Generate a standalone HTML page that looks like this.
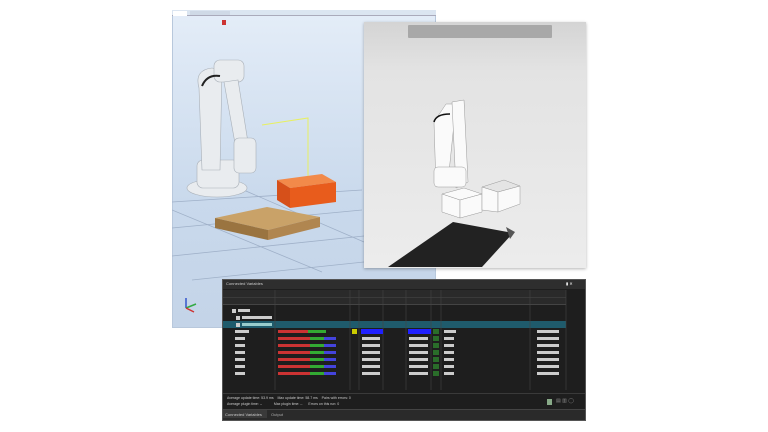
<!DOCTYPE html>
<html><head><meta charset="utf-8"><style>
*{margin:0;padding:0;box-sizing:border-box}
body{width:768px;height:432px;background:#fff;position:relative;overflow:hidden;font-family:"Liberation Sans",sans-serif}
.a{position:absolute}
.t{font-size:4px;color:#ddd;white-space:nowrap;position:absolute}
</style></head><body>
<div class="a" style="left:172px;top:10px;width:264px;height:318px;background:linear-gradient(#e4edf8,#c9d9ec 60%,#c4d4e8);border:1px solid #b8c8dc"></div>
<div class="a" style="left:172px;top:10px;width:264px;height:6px;background:#dbe5f1;border-bottom:1px solid #aab"></div>
<div class="a" style="left:173px;top:11px;width:14px;height:5px;background:#fff"></div>
<div class="a" style="left:190px;top:11px;width:40px;height:4px;background:#cfd9e6"></div>
<div class="a" style="left:222px;top:20px;width:4px;height:5px;background:#c33"></div>
<svg class="a" style="left:172px;top:10px" width="264" height="318">
<g stroke="#9fb0c8" stroke-width="0.8" fill="none">
<path d="M0 192 L190 180 M0 218 L190 200 M0 246 L192 226 M20 270 L192 252 M60 175 L192 232 M0 200 L150 262"/>
</g>
<path d="M90 115 L136 108 L136 172" stroke="#e8f060" stroke-width="1" fill="none"/>
<polygon points="105,170 150,164 164,172 118,178" fill="#f28a4a"/>
<polygon points="105,170 118,178 118,198 105,190" fill="#d6501a"/>
<polygon points="118,178 164,172 164,192 118,198" fill="#e85c1c"/>
<polygon points="43,208 95,197 148,207 96,220" fill="#c9a268"/>
<polygon points="43,208 96,220 96,230 43,218" fill="#9a7440"/>
<polygon points="96,220 148,207 148,217 96,230" fill="#b08650"/>
<g fill="#e9ecef" stroke="#a9b0b8" stroke-width="0.6">
<ellipse cx="45" cy="178" rx="30" ry="9"/>
<rect x="25" y="150" width="42" height="28" rx="6"/>
<path d="M27 78 Q22 60 40 58 L50 60 L48 160 L30 160 Z"/>
<rect x="42" y="50" width="30" height="22" rx="6"/>
<path d="M52 72 L66 70 L78 145 L66 150 Z"/>
<rect x="62" y="128" width="22" height="35" rx="5"/>
</g>
<path d="M30 76 Q35 64 48 66" stroke="#222" stroke-width="2" fill="none"/>
<path d="M14 298 L14 288" stroke-width="1.5" stroke="#3355cc"/>
<path d="M14 298 L24 294" stroke="#33aa44" stroke-width="1.5"/>
<path d="M14 298 L22 302" stroke="#cc3333" stroke-width="1.5"/>
</svg>
<div class="a" style="left:364px;top:22px;width:222px;height:246px;background:linear-gradient(#d4d4d4,#e3e3e3 20%,#ececec);box-shadow:0 1px 3px rgba(0,0,0,.3)"></div>
<div class="a" style="left:408px;top:25px;width:144px;height:13px;background:#a8a8a8;border-radius:1px"></div>
<svg class="a" style="left:364px;top:22px" width="222" height="246">
<polygon points="24,245 89,200 149,211 118,245" fill="#222"/>
<polygon points="142,205 151,210 146,217" fill="#555"/>
<g fill="#fafafa" stroke="#999" stroke-width="0.5">
<polygon points="78,172 100,166 118,172 96,178"/>
<polygon points="78,172 96,178 96,196 78,190"/>
<polygon points="96,178 118,172 118,190 96,196"/>
<polygon points="118,165 140,158 156,164 134,170" fill="#e4e4e4"/>
<polygon points="118,165 134,170 134,190 118,188"/>
<polygon points="134,170 156,164 156,182 134,190"/>
<path d="M70 100 L82 82 L92 82 L84 160 L72 165 Z"/>
<path d="M88 80 L100 78 L104 160 L92 166 Z"/>
<rect x="70" y="145" width="32" height="20" rx="4"/>
</g>
<path d="M70 100 Q72 92 86 92" stroke="#111" stroke-width="1.6" fill="none"/>
</svg>
<div class="a" style="left:222px;top:279px;width:364px;height:142px;background:#1e1e1e;border:1px solid #555"></div>
<div class="a" style="left:223px;top:280px;width:362px;height:9px;background:#2e2e2e"></div>
<div class="t" style="left:226px;top:281px;color:#ccc">Connected Variables</div>
<div class="t" style="left:566px;top:281px;color:#fff">▮ ✕</div>
<div class="a" style="left:223px;top:290px;width:343px;height:15px;background:#2a2a2a;border-bottom:1px solid #444"></div>
<div class="a" style="left:223px;top:297px;width:343px;height:1px;background:#3a3a3a"></div>
<div class="a" style="left:223px;top:321px;width:343px;height:7px;background:#1f5b6c"></div>
<svg class="a" style="left:222px;top:290px" width="364" height="100">
<g stroke="#444" stroke-width="0.6">
<path d="M53 0V100M128 0V100M137 0V100M161 0V100M184 0V100M209 0V100M219 0V100M308 0V100M344 0V100"/>
</g>
<g fill="#2020ff"><rect x="139" y="39" width="22" height="5"/><rect x="186" y="39" width="23" height="5"/></g>
<g fill="#2a6d2a"><rect x="211" y="39" width="6" height="5"/><rect x="211" y="46" width="6" height="5"/><rect x="211" y="53" width="6" height="5"/><rect x="211" y="60" width="6" height="5"/><rect x="211" y="67" width="6" height="5"/><rect x="211" y="74" width="6" height="5"/><rect x="211" y="81" width="6" height="5"/></g>
<g fill="#c33"><rect x="56" y="40" width="30" height="3"/><rect x="56" y="47" width="32" height="3"/><rect x="56" y="54" width="32" height="3"/><rect x="56" y="61" width="32" height="3"/><rect x="56" y="68" width="32" height="3"/><rect x="56" y="75" width="32" height="3"/><rect x="56" y="82" width="32" height="3"/></g>
<g fill="#3a3"><rect x="86" y="40" width="18" height="3"/><rect x="88" y="47" width="14" height="3"/><rect x="88" y="54" width="14" height="3"/><rect x="88" y="61" width="14" height="3"/><rect x="88" y="68" width="14" height="3"/><rect x="88" y="75" width="14" height="3"/><rect x="88" y="82" width="14" height="3"/></g>
<g fill="#44d"><rect x="102" y="47" width="12" height="3"/><rect x="102" y="54" width="12" height="3"/><rect x="102" y="61" width="12" height="3"/><rect x="102" y="68" width="12" height="3"/><rect x="102" y="75" width="12" height="3"/><rect x="102" y="82" width="12" height="3"/></g>
<rect x="130" y="39" width="5" height="5" fill="#cc0"/>
<g fill="#ccc"><rect x="140" y="47" width="18" height="3"/><rect x="140" y="54" width="18" height="3"/><rect x="140" y="61" width="18" height="3"/><rect x="140" y="68" width="18" height="3"/><rect x="140" y="75" width="18" height="3"/><rect x="140" y="82" width="18" height="3"/>
<rect x="187" y="47" width="19" height="3"/><rect x="187" y="54" width="19" height="3"/><rect x="187" y="61" width="19" height="3"/><rect x="187" y="68" width="19" height="3"/><rect x="187" y="75" width="19" height="3"/><rect x="187" y="82" width="19" height="3"/>
<rect x="222" y="40" width="12" height="3"/><rect x="222" y="47" width="10" height="3"/><rect x="222" y="54" width="10" height="3"/><rect x="222" y="61" width="10" height="3"/><rect x="222" y="68" width="10" height="3"/><rect x="222" y="75" width="10" height="3"/><rect x="222" y="82" width="10" height="3"/>
<rect x="315" y="40" width="22" height="3"/><rect x="315" y="47" width="22" height="3"/><rect x="315" y="54" width="22" height="3"/><rect x="315" y="61" width="22" height="3"/><rect x="315" y="68" width="22" height="3"/><rect x="315" y="75" width="22" height="3"/><rect x="315" y="82" width="22" height="3"/>
<rect x="13" y="40" width="14" height="3"/><rect x="13" y="47" width="10" height="3"/><rect x="13" y="54" width="10" height="3"/><rect x="13" y="61" width="10" height="3"/><rect x="13" y="68" width="10" height="3"/><rect x="13" y="75" width="10" height="3"/><rect x="13" y="82" width="10" height="3"/>
<rect x="10" y="19" width="4" height="4"/><rect x="16" y="19" width="12" height="3"/>
<rect x="14" y="26" width="4" height="4"/><rect x="20" y="26" width="30" height="3"/>
<rect x="14" y="33" width="4" height="4"/><rect x="20" y="33" width="30" height="3" fill="#9cc"/></g>
</svg>
<div class="a" style="left:223px;top:393px;width:362px;height:1px;background:#3a3a3a"></div>
<div class="t" style="left:227px;top:396px;font-size:3.5px;color:#ccc">Average update time: 53.9 ms &nbsp;&nbsp; Max update time: 58.7 ms &nbsp;&nbsp; Pairs with errors: 0</div>
<div class="t" style="left:227px;top:402px;font-size:3.5px;color:#ccc">Average plugin time: -- &nbsp;&nbsp;&nbsp;&nbsp;&nbsp;&nbsp;&nbsp;&nbsp;&nbsp;&nbsp; Max plugin time: -- &nbsp;&nbsp;&nbsp;&nbsp; Errors on this run: 0</div>
<div class="a" style="left:547px;top:399px;width:5px;height:6px;background:#8a8"></div>
<div class="t" style="left:556px;top:398px;color:#888;font-size:5px">▤ ▥ ◯</div>
<div class="a" style="left:223px;top:409px;width:362px;height:11px;background:#2a2a2a;border-top:1px solid #444"></div>
<div class="a" style="left:223px;top:410px;width:44px;height:8px;background:#3a3a3a"></div>
<div class="t" style="left:225px;top:412px;color:#ccc">Connected Variables</div>
<div class="t" style="left:271px;top:412px;color:#aaa">Output</div>
</body></html>
